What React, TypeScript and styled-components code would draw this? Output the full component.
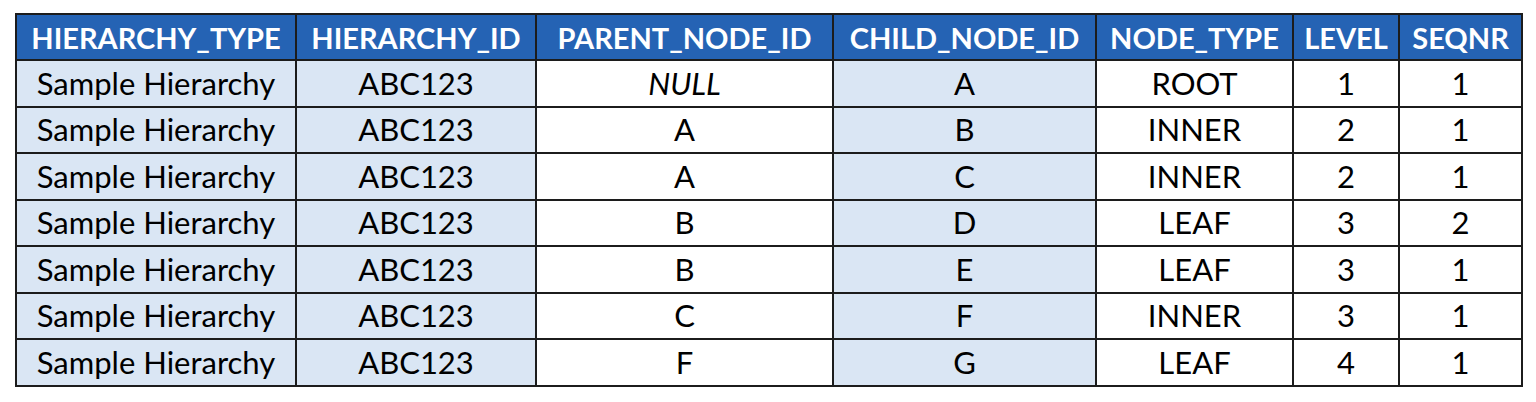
import React from 'react';
import styled, { createGlobalStyle } from 'styled-components';

const GlobalStyle = createGlobalStyle`
  html, body {
    margin: 0;
    padding: 0;
    background: #ffffff;
  }
`;

const Page = styled.div`
  padding: 13px 0 0 15px;
  font-family: 'Lato', 'Liberation Sans', sans-serif;
`;

const Table = styled.table`
  border-collapse: collapse;
  table-layout: fixed;
  width: 1506px;
`;

const HeadCell = styled.th`
  background: #2563b4;
  color: #ffffff;
  font-weight: 700;
  font-size: 29px;
  line-height: 1;
  height: 44px;
  padding: 0;
  border: 2px solid #1c1c1c;
  text-align: center;
  white-space: nowrap;
  overflow: hidden;
`;

const Cell = styled.td<{ shaded?: boolean; italic?: boolean }>`
  background: ${(p) => (p.shaded ? '#dae6f4' : '#ffffff')};
  color: #000000;
  font-size: 31px;
  line-height: 1;
  font-style: ${(p) => (p.italic ? 'italic' : 'normal')};
  height: 44.5px;
  padding: 0;
  border: 2px solid #1c1c1c;
  text-align: center;
  white-space: nowrap;
`;

const columns = [
  { name: 'HIERARCHY_TYPE', width: 280, shaded: true },
  { name: 'HIERARCHY_ID', width: 240, shaded: true },
  { name: 'PARENT_NODE_ID', width: 297, shaded: false },
  { name: 'CHILD_NODE_ID', width: 263, shaded: true },
  { name: 'NODE_TYPE', width: 197, shaded: false },
  { name: 'LEVEL', width: 106, shaded: false },
  { name: 'SEQNR', width: 123, shaded: false },
];

const rows = [
  ['Sample Hierarchy', 'ABC123', 'NULL', 'A', 'ROOT', '1', '1'],
  ['Sample Hierarchy', 'ABC123', 'A', 'B', 'INNER', '2', '1'],
  ['Sample Hierarchy', 'ABC123', 'A', 'C', 'INNER', '2', '1'],
  ['Sample Hierarchy', 'ABC123', 'B', 'D', 'LEAF', '3', '2'],
  ['Sample Hierarchy', 'ABC123', 'B', 'E', 'LEAF', '3', '1'],
  ['Sample Hierarchy', 'ABC123', 'C', 'F', 'INNER', '3', '1'],
  ['Sample Hierarchy', 'ABC123', 'F', 'G', 'LEAF', '4', '1'],
];

const App = () => {
  return (
    <Page>
      <GlobalStyle />
      <Table>
        <colgroup>
          {columns.map((c) => (
            <col key={c.name} style={{ width: c.width }} />
          ))}
        </colgroup>
        <thead>
          <tr>
            {columns.map((c) => (
              <HeadCell key={c.name}>{c.name}</HeadCell>
            ))}
          </tr>
        </thead>
        <tbody>
          {rows.map((row, i) => (
            <tr key={i}>
              {row.map((value, j) => (
                <Cell key={j} shaded={columns[j].shaded} italic={value === 'NULL'}>
                  {value}
                </Cell>
              ))}
            </tr>
          ))}
        </tbody>
      </Table>
    </Page>
  );
};

export default App;
